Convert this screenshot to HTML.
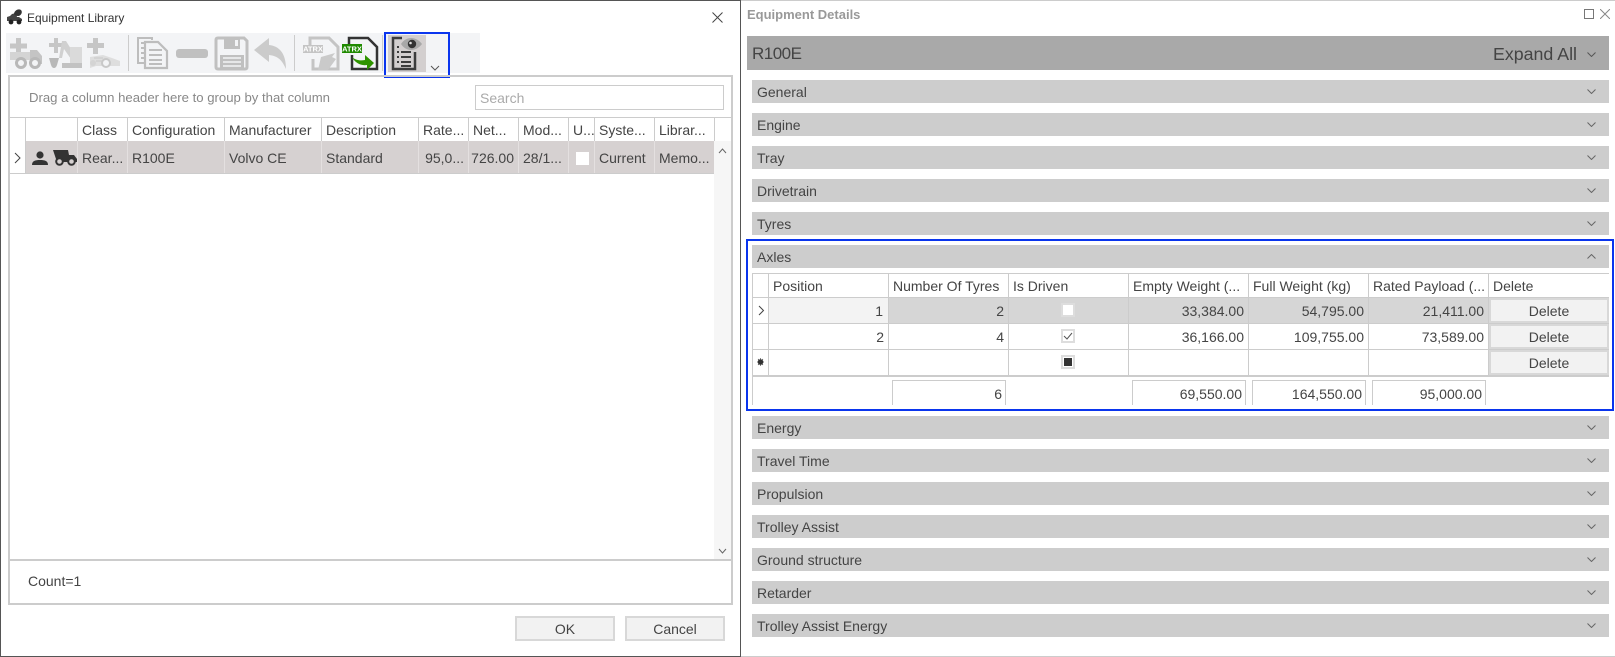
<!DOCTYPE html>
<html><head><meta charset="utf-8"><title>Equipment Library</title>
<style>
html,body{margin:0;padding:0;background:#fff}
#p{position:relative;width:1615px;height:657px;overflow:hidden;background:#fff;font-family:"Liberation Sans",sans-serif;font-size:14px;color:#444}
#p div,#p svg{position:absolute}
.t{white-space:nowrap;line-height:18px;height:18px}
.r{text-align:right}
.l{background:#ccc}
.bar{left:752px;width:857px;height:23px;background:#cdcdcd}
.bar span{position:absolute;left:5px;top:3px;line-height:18px;font-size:14px;color:#444}
.c{left:1587px;width:9px;height:5px}
.b{background:#f2f2f2;border:2px solid #d8d8d8;box-sizing:border-box;text-align:center;line-height:23px}
.s{border:1px solid #ccc;border-bottom:0;box-sizing:border-box;text-align:right;padding-right:3px;line-height:26px;top:380px;height:25px}
.cb{box-sizing:border-box;width:14px;height:14px;background:#fff;border:2px solid #ddd}
</style></head><body><div id="p">

<!-- left window frame -->
<div style="left:0;top:0;width:741px;height:657px;box-sizing:border-box;border:1px solid #555"></div>
<svg style="left:6px;top:8px" width="18" height="17" viewBox="0 0 18 17"><path d="M1 9l3-1 2-2 4-1 1 4h2l3 2v2H1z" fill="#444"/><path d="M8 6c0-3 4-6 7-4 2 2 0 6-3 6-2 0-3-1-4-2z" fill="#333"/><circle cx="5" cy="14" r="2.400" fill="#222"/><circle cx="13" cy="14" r="2.400" fill="#222"/></svg>
<div class="t" style="left:27px;top:9px;font-size:12px;color:#333">Equipment Library</div>
<svg style="left:712px;top:12px" width="11" height="11"><path d="M.5.5l10 10M10.500.5l-10 10" stroke="#444" fill="none"/></svg>

<!-- toolbar -->
<div style="left:6px;top:33px;width:474px;height:40px;background:#f3f4f6"></div>
<div class="l" style="left:128px;top:35px;width:1px;height:36px"></div>
<div class="l" style="left:294px;top:35px;width:1px;height:36px"></div>
<div class="l" style="left:382px;top:35px;width:1px;height:36px"></div>
<svg style="left:6px;top:33px" width="480" height="48" viewBox="0 0 480 48">
 <!-- add truck -->
 <path d="M10 5h5v5.500h6v5h-6V22h-5v-6.500H4v-5h6z" fill="#c6c6c6"/>
 <path d="M4 19h20v8H4z" fill="#d4d4d4"/><path d="M24 17h7l5 6v8H24z" fill="#c4c4c4"/>
 <circle cx="15" cy="30" r="4.500" fill="#f3f4f6" stroke="#b8b8b8" stroke-width="3"/><circle cx="29" cy="30" r="4.500" fill="#f3f4f6" stroke="#b8b8b8" stroke-width="3"/>
 <!-- add excavator -->
 <path d="M48 5h4v5h5v4h-5v6h-4v-6h-5v-4h5z" fill="#c6c6c6"/>
 <path d="M53 25l3-17h4l10 16-5 2-7-10-2 9z" fill="#d0d0d0"/><path d="M64 14h12v16H64z" fill="#dadada"/><path d="M43 25h10l-2 7q-1 3-3 3t-3-3z" fill="#b8b8b8"/><path d="M56 30h20v5H56z" fill="#c2c2c2"/>
 <!-- add loader -->
 <path d="M87 5h5v5h6v5h-6v6h-5v-6h-6v-5h6z" fill="#c6c6c6"/>
 <path d="M84 24l13-2 9 3 8 3v5H90l-6 2z" fill="#dedede"/><path d="M88 25h9M90 28h6" stroke="#c8c8c8"/><circle cx="100" cy="30" r="4" fill="#f3f4f6" stroke="#c8c8c8" stroke-width="2"/><circle cx="87" cy="30" r="3" fill="#d4d4d4"/>
 <!-- copy -->
 <path d="M143 30h-11V5h14v2" fill="none" stroke="#bdbdbd" stroke-width="2"/><path d="M135 10h5M135 15h5M135 20h5M135 25h5" stroke="#bdbdbd" stroke-width="2"/>
 <path d="M139 9h13l9 9v17h-22z" fill="#f3f4f6" stroke="#bdbdbd" stroke-width="2.200"/><path d="M143 17h13M143 22h13M143 27h13M143 31h13" stroke="#bdbdbd" stroke-width="2"/>
 <!-- minus -->
 <rect x="170" y="16" width="32" height="9" rx="3" fill="#c0c0c0"/>
 <!-- save -->
 <path d="M210 7q0-2 2-2h26l3 3v26q0 2-2 2h-27q-2 0-2-2z" fill="none" stroke="#c0c0c0" stroke-width="3"/><path d="M218 5h16v11h-16z" fill="#c0c0c0"/><rect x="229" y="7" width="3" height="6" fill="#f3f4f6"/><path d="M214 22h24v14h-24z" fill="#c0c0c0"/><path d="M217 25h18M217 29h18M217 33h18" stroke="#f3f4f6" stroke-width="1.500"/>
 <!-- undo -->
 <path d="M248 17L263 5v7c10 1 17 8 17 24-4-9-8-13-17-14v7z" fill="#cbcbcb"/>
 <!-- atrx gray -->
 <path d="M304 12V5h19l9 9v22h-25V26" fill="none" stroke="#c4c4c4" stroke-width="3"/>
 <rect x="297" y="12" width="20" height="8" fill="#c4c4c4"/><text x="307" y="18.500" font-family="Liberation Sans" font-size="7.500" font-weight="bold" fill="#fff" text-anchor="middle">ATRX</text>
 <path d="M312 37l3-13 14-4-3 4 4 2-8 11z" fill="#cacaca"/>
 <!-- atrx green -->
 <path d="M343 12V5h19l9 9v22h-25V22" fill="none" stroke="#333" stroke-width="2.500"/>
 <rect x="336" y="11" width="20" height="9" fill="#1f8a00"/><text x="346" y="18.500" font-family="Liberation Sans" font-size="7.500" font-weight="bold" fill="#fff" text-anchor="middle">ATRX</text>
 <path d="M346 24c3 3 8 4 13 3v-5l9 8-7 7v-5c-6 1-12-2-15-8z" fill="#2f9400"/>
 <!-- selected -->
 <rect x="382" y="2" width="38" height="37" fill="#d3cfcf"/>
 <path d="M396 5h-9v31h22V19" fill="none" stroke="#3c3c3c" stroke-width="2.500"/>
 <path d="M391 14h2M391 19h2M391 24h2M391 29h2" stroke="#3c3c3c" stroke-width="2"/><path d="M395 19h10M395 24h10M395 29h10M395 33h10" stroke="#3c3c3c" stroke-width="2"/>
 <path d="M395 11c5-8 15-8 21 0-6 8-16 8-21 0z" fill="#a8a8a8"/><circle cx="406" cy="11" r="4.200" fill="#333"/><circle cx="404.500" cy="10" r="1.300" fill="#ddd"/>
</svg>
<svg style="left:430px;top:65px" width="10" height="6"><path d="M1 1l4 4 4-4" fill="none" stroke="#555"/></svg>
<div style="left:384px;top:32px;width:66px;height:46px;box-sizing:border-box;border:2px solid #0a35ee"></div>

<!-- grid frame -->
<div style="left:8px;top:75px;width:725px;height:530px;box-sizing:border-box;border:2px solid #ccc"></div>
<div class="t" style="left:29px;top:89px;font-size:13.150px;color:#888">Drag a column header here to group by that column</div>
<div style="left:475px;top:85px;width:249px;height:25px;box-sizing:border-box;border:1px solid #ccc"></div>
<div class="t" style="left:480px;top:89px;color:#aaa">Search</div>

<!-- left grid lines -->
<div class="l" style="left:10px;top:117px;width:721px;height:1px"></div>
<div style="left:26px;top:141px;width:688px;height:32px;background:#d6d1d1"></div>
<div class="l" style="left:10px;top:173px;width:704px;height:1px"></div>
<div class="l" style="left:10px;top:559px;width:721px;height:2px"></div>
<div style="left:714px;top:141px;width:17px;height:418px;background:#f6f6f6"></div>
<div class="l" style="left:25px;top:117px;width:1px;height:56px"></div>
<div class="l" style="left:77px;top:117px;width:1px;height:24px"></div><div style="left:77px;top:141px;width:1px;height:32px;background:#e4e0e0"></div>
<div class="l" style="left:127px;top:117px;width:1px;height:24px"></div><div style="left:127px;top:141px;width:1px;height:32px;background:#e4e0e0"></div>
<div class="l" style="left:224px;top:117px;width:1px;height:24px"></div><div style="left:224px;top:141px;width:1px;height:32px;background:#e4e0e0"></div>
<div class="l" style="left:321px;top:117px;width:1px;height:24px"></div><div style="left:321px;top:141px;width:1px;height:32px;background:#e4e0e0"></div>
<div class="l" style="left:418px;top:117px;width:1px;height:24px"></div><div style="left:418px;top:141px;width:1px;height:32px;background:#e4e0e0"></div>
<div class="l" style="left:468px;top:117px;width:1px;height:24px"></div><div style="left:468px;top:141px;width:1px;height:32px;background:#e4e0e0"></div>
<div class="l" style="left:518px;top:117px;width:1px;height:24px"></div><div style="left:518px;top:141px;width:1px;height:32px;background:#e4e0e0"></div>
<div class="l" style="left:568px;top:117px;width:1px;height:24px"></div><div style="left:568px;top:141px;width:1px;height:32px;background:#e4e0e0"></div>
<div class="l" style="left:594px;top:117px;width:1px;height:24px"></div><div style="left:594px;top:141px;width:1px;height:32px;background:#e4e0e0"></div>
<div class="l" style="left:654px;top:117px;width:1px;height:24px"></div><div style="left:654px;top:141px;width:1px;height:32px;background:#e4e0e0"></div>
<div class="l" style="left:714px;top:117px;width:1px;height:24px"></div>

<div class="t" style="left:82px;top:121px">Class</div>
<div class="t" style="left:132px;top:121px">Configuration</div>
<div class="t" style="left:229px;top:121px">Manufacturer</div>
<div class="t" style="left:326px;top:121px">Description</div>
<div class="t" style="left:423px;top:121px">Rate...</div>
<div class="t" style="left:473px;top:121px">Net...</div>
<div class="t" style="left:523px;top:121px">Mod...</div>
<div class="t" style="left:573px;top:121px">U...</div>
<div class="t" style="left:599px;top:121px">Syste...</div>
<div class="t" style="left:659px;top:121px">Librar...</div>

<svg style="left:14px;top:152px" width="7" height="12"><path d="M1 1l5 5-5 5" fill="none" stroke="#444"/></svg>
<svg style="left:32px;top:151px" width="16" height="14" viewBox="0 0 16 14"><circle cx="8" cy="4" r="3.600" fill="#333"/><path d="M0 14c0-4 3-5 8-5s8 1 8 5z" fill="#333"/></svg>
<svg style="left:53px;top:149px" width="25" height="17" viewBox="0 0 25 17"><path d="M0 1h15l1 5h5l3 4v3H4z" fill="#333"/><circle cx="6.500" cy="12.500" r="3.300" fill="#d6d1d1" stroke="#333" stroke-width="2"/><circle cx="18.500" cy="12.500" r="3.300" fill="#d6d1d1" stroke="#333" stroke-width="2"/></svg>
<div class="t" style="left:82px;top:149px">Rear...</div>
<div class="t" style="left:132px;top:149px">R100E</div>
<div class="t" style="left:229px;top:149px">Volvo CE</div>
<div class="t" style="left:326px;top:149px">Standard</div>
<div class="t r" style="left:419px;width:45px;top:149px">95,0...</div>
<div class="t r" style="left:469px;width:45px;top:149px">726.00</div>
<div class="t" style="left:523px;top:149px">28/1...</div>
<div style="left:576px;top:152px;width:13px;height:13px;background:#fff"></div>
<div class="t" style="left:599px;top:149px">Current</div>
<div class="t" style="left:659px;top:149px">Memo...</div>
<svg style="left:718px;top:148px" width="9" height="6"><path d="M1 5l3.500-4L8 5" fill="none" stroke="#666"/></svg>
<svg style="left:718px;top:548px" width="9" height="6"><path d="M1 1l3.500 4L8 1" fill="none" stroke="#666"/></svg>

<div class="t" style="left:28px;top:572px">Count=1</div>
<div class="b" style="left:515px;top:616px;width:100px;height:25px">OK</div>
<div class="b" style="left:625px;top:616px;width:100px;height:25px">Cancel</div>

<!-- right panel -->
<div class="l" style="left:741px;top:0;width:874px;height:1px"></div>
<div class="l" style="left:741px;top:656px;width:874px;height:1px"></div>
<div class="t" style="left:747px;top:6px;font-size:13px;font-weight:bold;color:#999">Equipment Details</div>
<div style="left:1584px;top:9px;width:10px;height:10px;box-sizing:border-box;border:1px solid #777"></div>
<svg style="left:1600px;top:9px" width="10" height="10"><path d="M0 0l10 10M10 0L0 10" stroke="#888" fill="none"/></svg>

<div style="left:747px;top:36px;width:862px;height:34px;background:#a9a9a9"></div>
<div class="t" style="left:752px;top:45px;font-size:17px;letter-spacing:-.5px;color:#444">R100E</div>
<div class="t r" style="left:1400px;width:177px;top:45px;font-size:17.800px;color:#444">Expand All</div>
<svg class="c" style="top:52px" width="9" height="5"><path d="M.5.5l4 4 4-4" fill="none" stroke="#555"/></svg>

<div class="bar" style="top:80px"><span>General</span></div><svg class="c" style="top:89px" width="9" height="5"><path d="M.5.500l4 4 4-4" fill="none" stroke="#666"/></svg>
<div class="bar" style="top:113px"><span>Engine</span></div><svg class="c" style="top:122px" width="9" height="5"><path d="M.5.500l4 4 4-4" fill="none" stroke="#666"/></svg>
<div class="bar" style="top:146px"><span>Tray</span></div><svg class="c" style="top:155px" width="9" height="5"><path d="M.5.500l4 4 4-4" fill="none" stroke="#666"/></svg>
<div class="bar" style="top:179px"><span>Drivetrain</span></div><svg class="c" style="top:188px" width="9" height="5"><path d="M.5.500l4 4 4-4" fill="none" stroke="#666"/></svg>
<div class="bar" style="top:212px"><span>Tyres</span></div><svg class="c" style="top:221px" width="9" height="5"><path d="M.5.500l4 4 4-4" fill="none" stroke="#666"/></svg>
<div class="bar" style="top:245px"><span>Axles</span></div><svg class="c" style="top:254px" width="9" height="5"><path d="M.5 4.500l4-4 4 4" fill="none" stroke="#666"/></svg>
<div class="bar" style="top:416px"><span>Energy</span></div><svg class="c" style="top:425px" width="9" height="5"><path d="M.5.500l4 4 4-4" fill="none" stroke="#666"/></svg>
<div class="bar" style="top:449px"><span>Travel Time</span></div><svg class="c" style="top:458px" width="9" height="5"><path d="M.5.500l4 4 4-4" fill="none" stroke="#666"/></svg>
<div class="bar" style="top:482px"><span>Propulsion</span></div><svg class="c" style="top:491px" width="9" height="5"><path d="M.5.500l4 4 4-4" fill="none" stroke="#666"/></svg>
<div class="bar" style="top:515px"><span>Trolley Assist</span></div><svg class="c" style="top:524px" width="9" height="5"><path d="M.5.500l4 4 4-4" fill="none" stroke="#666"/></svg>
<div class="bar" style="top:548px"><span>Ground structure</span></div><svg class="c" style="top:557px" width="9" height="5"><path d="M.5.500l4 4 4-4" fill="none" stroke="#666"/></svg>
<div class="bar" style="top:581px"><span>Retarder</span></div><svg class="c" style="top:590px" width="9" height="5"><path d="M.5.500l4 4 4-4" fill="none" stroke="#666"/></svg>
<div class="bar" style="top:614px"><span>Trolley Assist Energy</span></div><svg class="c" style="top:623px" width="9" height="5"><path d="M.5.500l4 4 4-4" fill="none" stroke="#666"/></svg>

<!-- axles grid -->
<div style="left:768px;top:298px;width:120px;height:25px;background:#f3f3f3"></div>
<div style="left:888px;top:298px;width:600px;height:25px;background:#d6d6d6"></div>
<div class="l" style="left:752px;top:273px;width:857px;height:1px"></div>
<div class="l" style="left:752px;top:297px;width:857px;height:1px"></div>
<div class="l" style="left:752px;top:323px;width:857px;height:1px"></div>
<div class="l" style="left:752px;top:349px;width:857px;height:1px"></div>
<div class="l" style="left:752px;top:375px;width:857px;height:2px"></div>
<div class="l" style="left:752px;top:273px;width:1px;height:102px"></div>
<div class="l" style="left:768px;top:273px;width:1px;height:102px"></div>
<div class="l" style="left:888px;top:273px;width:1px;height:102px"></div>
<div class="l" style="left:1008px;top:273px;width:1px;height:102px"></div>
<div class="l" style="left:1128px;top:273px;width:1px;height:102px"></div>
<div class="l" style="left:1248px;top:273px;width:1px;height:102px"></div>
<div class="l" style="left:1368px;top:273px;width:1px;height:102px"></div>
<div class="l" style="left:1488px;top:273px;width:1px;height:102px"></div>
<div class="l" style="left:752px;top:377px;width:1px;height:28px"></div>

<div class="t" style="left:773px;top:277px">Position</div>
<div class="t" style="left:893px;top:277px">Number Of Tyres</div>
<div class="t" style="left:1013px;top:277px">Is Driven</div>
<div class="t" style="left:1133px;top:277px">Empty Weight (...</div>
<div class="t" style="left:1253px;top:277px">Full Weight (kg)</div>
<div class="t" style="left:1373px;top:277px">Rated Payload (...</div>
<div class="t" style="left:1493px;top:277px">Delete</div>

<svg style="left:758px;top:305px" width="7" height="11"><path d="M1 1l4.500 4.500L1 10" fill="none" stroke="#444"/></svg>
<svg style="left:757px;top:358px" width="7" height="8"><circle cx="3.500" cy="4" r="2.800" fill="#333"/><path d="M3.500 0v8M0 4h7M1 1l5 6M6 1L1 7" stroke="#333" stroke-width=".6"/></svg>

<div class="t r" style="left:770px;width:113px;top:302px">1</div>
<div class="t r" style="left:890px;width:114px;top:302px">2</div>
<div class="t r" style="left:1130px;width:114px;top:302px">33,384.00</div>
<div class="t r" style="left:1250px;width:114px;top:302px">54,795.00</div>
<div class="t r" style="left:1370px;width:114px;top:302px">21,411.00</div>
<div class="t r" style="left:770px;width:114px;top:328px">2</div>
<div class="t r" style="left:890px;width:114px;top:328px">4</div>
<div class="t r" style="left:1130px;width:114px;top:328px">36,166.00</div>
<div class="t r" style="left:1250px;width:114px;top:328px">109,755.00</div>
<div class="t r" style="left:1370px;width:114px;top:328px">73,589.00</div>

<div class="cb" style="left:1061px;top:303px"></div>
<div class="cb" style="left:1061px;top:329px"></div>
<svg style="left:1063px;top:332px" width="10" height="8"><path d="M1 4l3 3 5-6" fill="none" stroke="#555"/></svg>
<div class="cb" style="left:1061px;top:355px"></div>
<div style="left:1064px;top:358px;width:8px;height:8px;background:#333"></div>

<div class="b" style="left:1489px;top:298px;width:120px;height:25px">Delete</div>
<div class="b" style="left:1489px;top:324px;width:120px;height:25px">Delete</div>
<div class="b" style="left:1489px;top:350px;width:120px;height:25px">Delete</div>

<div class="s" style="left:892px;width:114px">6</div>
<div class="s" style="left:1132px;width:114px">69,550.00</div>
<div class="s" style="left:1252px;width:114px">164,550.00</div>
<div class="s" style="left:1372px;width:114px">95,000.00</div>

<div style="left:746px;top:239px;width:868px;height:172px;box-sizing:border-box;border:2px solid #0a35ee"></div>
</div></body></html>
